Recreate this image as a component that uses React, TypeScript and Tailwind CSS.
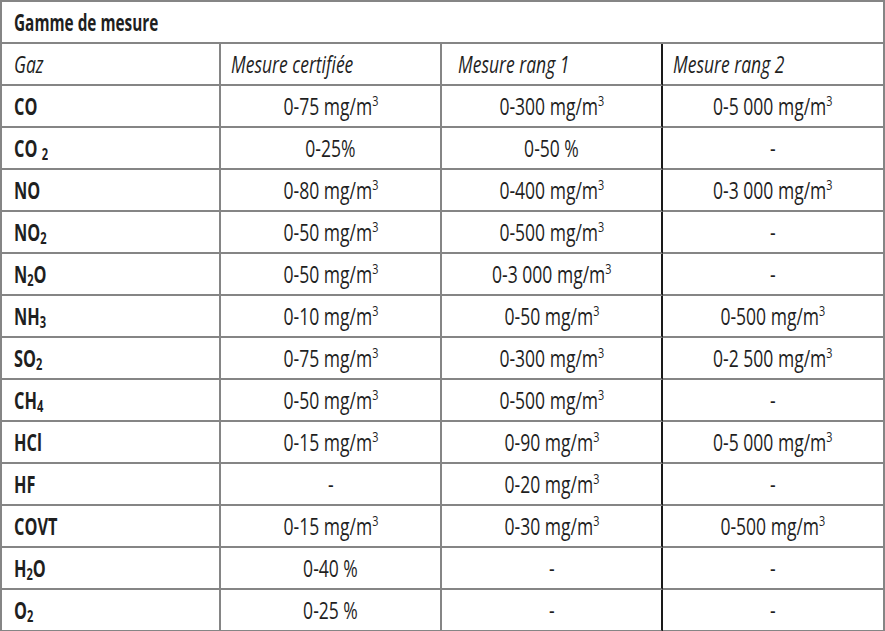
import React from "react";

type Cell = React.ReactNode;

const M3 = ({ v }: { v: string }) => (
  <>
    {v} mg/m<sup className="text-[0.62em] -top-[0.62em]">3</sup>
  </>
);

const Sub = ({ children }: { children: React.ReactNode }) => (
  <sub className="text-[0.68em] -bottom-[0.2em]">{children}</sub>
);

const rows: [Cell, Cell, Cell, Cell][] = [
  ["CO", <M3 v="0-75" />, <M3 v="0-300" />, <M3 v="0-5 000" />],
  [<>CO <Sub>2</Sub></>, "0-25%", "0-50 %", "-"],
  ["NO", <M3 v="0-80" />, <M3 v="0-400" />, <M3 v="0-3 000" />],
  [<>NO<Sub>2</Sub></>, <M3 v="0-50" />, <M3 v="0-500" />, "-"],
  [<>N<Sub>2</Sub>O</>, <M3 v="0-50" />, <M3 v="0-3 000" />, "-"],
  [<>NH<Sub>3</Sub></>, <M3 v="0-10" />, <M3 v="0-50" />, <M3 v="0-500" />],
  [<>SO<Sub>2</Sub></>, <M3 v="0-75" />, <M3 v="0-300" />, <M3 v="0-2 500" />],
  [<>CH<Sub>4</Sub></>, <M3 v="0-50" />, <M3 v="0-500" />, "-"],
  ["HCl", <M3 v="0-15" />, <M3 v="0-90" />, <M3 v="0-5 000" />],
  ["HF", "-", <M3 v="0-20" />, "-"],
  ["COVT", <M3 v="0-15" />, <M3 v="0-30" />, <M3 v="0-500" />],
  [<>H<Sub>2</Sub>O</>, "0-40 %", "-", "-"],
  [<>O<Sub>2</Sub></>, "0-25 %", "-", "-"],
];

const font = { fontFamily: '"Open Sans", "Noto Sans", sans-serif' };

const cellBase =
  "h-[42px] border-b-2 border-r-2 border-[#858585] flex items-center overflow-hidden";

export default function App() {
  return (
    <div className="w-[885px] h-[631px] overflow-hidden bg-white text-[#1f1f1f]" style={font}>
      <div className="border-l-2 border-t-2 border-[#858585] grid grid-cols-[219px_221px_221px_222px]">
        <div className={`${cellBase} col-span-4 pl-[12px]`}>
          <span className="inline-block origin-left scale-x-[0.64] text-[24px] font-bold whitespace-nowrap">
            Gamme de mesure
          </span>
        </div>
        {["Gaz", "Mesure certifiée", "Mesure rang 1", "Mesure rang 2"].map((h, i) => (
          <div
            key={h}
            className={`${cellBase} ${i === 2 ? "border-r-[#1a1a1a]" : ""} ${i === 0 ? "pl-[12px]" : i === 2 ? "pl-[16px]" : "pl-[10px]"}`}
          >
            <span className="inline-block origin-left scale-x-[0.73] text-[24px] italic whitespace-nowrap">
              {h}
            </span>
          </div>
        ))}
        {rows.map((r, ri) => (
          <React.Fragment key={ri}>
            <div className={`${cellBase} pl-[12px]`}>
              <span className="inline-block origin-left scale-x-[0.68] text-[24px] font-bold whitespace-nowrap">
                {r[0]}
              </span>
            </div>
            {[r[1], r[2], r[3]].map((c, ci) => (
              <div
                key={ci}
                className={`${cellBase} justify-center ${ci === 1 ? "border-r-[#1a1a1a]" : ""}`}
              >
                <span className="inline-block origin-center scale-x-[0.73] text-[24px] whitespace-nowrap">
                  {c}
                </span>
              </div>
            ))}
          </React.Fragment>
        ))}
      </div>
    </div>
  );
}
